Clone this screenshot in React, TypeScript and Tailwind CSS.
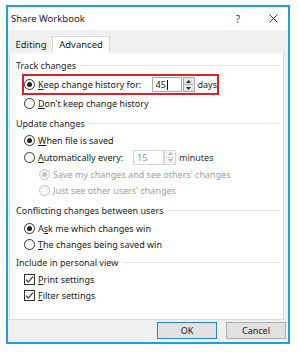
import React from "react";

function Radio({ checked = false, disabled = false }: { checked?: boolean; disabled?: boolean }) {
  return (
    <span
      className={`w-[11px] h-[11px] rounded-full border flex items-center justify-center shrink-0 ${
        disabled ? "border-[#c4c4c4] bg-[#f7f7f7]" : "border-[#333333] bg-white"
      }`}
    >
      {checked && (
        <span
          className={`w-[5px] h-[5px] rounded-full ${disabled ? "bg-[#c4c4c4]" : "bg-[#1f1f1f]"}`}
        ></span>
      )}
    </span>
  );
}

function Check() {
  return (
    <span className="w-[11px] h-[11px] border border-[#333333] bg-white flex items-center justify-center shrink-0">
      <svg width="9" height="9" viewBox="0 0 9 9">
        <path d="M1 4.6 L3.4 7 L8 1.6" fill="none" stroke="#222" strokeWidth="1.1" />
      </svg>
    </span>
  );
}

function Spinner({ disabled = false }: { disabled?: boolean }) {
  const c = disabled ? "#b5b5b5" : "#333";
  return (
    <div
      className={`w-[12px] h-[15px] border flex flex-col shrink-0 ${
        disabled ? "border-[#d6d6d6] bg-[#f4f4f4]" : "border-[#adadad] bg-[#e8e8e8]"
      }`}
    >
      <div className="flex-1 flex items-center justify-center">
        <svg width="5" height="3" viewBox="0 0 5 3">
          <path d="M0 3 L2.5 0 L5 3 Z" fill={c} />
        </svg>
      </div>
      <div className={`h-px mx-[1px] ${disabled ? "bg-[#d6d6d6]" : "bg-[#adadad]"}`}></div>
      <div className="flex-1 flex items-center justify-center">
        <svg width="5" height="3" viewBox="0 0 5 3">
          <path d="M0 0 L2.5 3 L5 0 Z" fill={c} />
        </svg>
      </div>
    </div>
  );
}

function GroupHeader({ label, className = "" }: { label: string; className?: string }) {
  return (
    <div className={`h-[16px] flex items-center gap-[5px] whitespace-nowrap ${className}`}>
      <span className="text-[#262626]">{label}</span>
      <div className="flex-1 h-px bg-[#e2e2e2]"></div>
    </div>
  );
}

export default function App() {
  return (
    <div
      className="w-[299px] h-[352px] bg-white pt-[5px] pl-[6px] text-[9px] leading-none text-[#1a1a1a] whitespace-nowrap"
      style={{ fontFamily: '"Noto Sans", "Open Sans", sans-serif' }}
    >
      <div className="w-[284px] h-[339px] border-2 border-[#1ba1e2] flex flex-col bg-[#f0f0f0]">
        {/* Title bar */}
        <div className="h-[23px] bg-white flex items-center pl-[3px] pr-[10px] shrink-0">
          <span className="text-[9.5px] text-[#1a1a1a]">Share Workbook</span>
          <span className="ml-auto text-[10px] text-[#333]">?</span>
          <svg className="ml-[29px]" width="9" height="9" viewBox="0 0 9 9">
            <path d="M0.5 0.5 L8.5 8.5 M8.5 0.5 L0.5 8.5" stroke="#333" strokeWidth="1" />
          </svg>
        </div>

        {/* Tabs */}
        <div className="h-[23px] flex items-end pl-[2px] shrink-0">
          <div className="h-[17px] w-[42px] flex items-center justify-center text-[9.5px]">Editing</div>
          <div className="h-[17px] w-[58px] bg-white border border-b-0 border-[#d9d9d9] flex items-center justify-center text-[9.5px]">
            Advanced
          </div>
        </div>

        {/* Panel */}
        <div className="h-[267px] ml-[1px] mr-[4px] bg-white border border-[#d9d9d9] border-t-0 pl-[6px] pr-[3px] pt-[4px] flex flex-col">
          <GroupHeader label="Track changes" />

          <div className="mt-[1px] ml-[6px] w-[197px] h-[21px] border-2 border-[#d8232a] flex items-center">
            <Radio checked />
            <span className="ml-[3px] w-[114px]">
              <u className="underline-offset-[1px]">K</u>eep change history for:
            </span>
            <div className="w-[30px] h-[15px] border border-[#abadb3] bg-white flex items-center pl-[3px]">
              45<span className="w-px h-[10px] bg-[#111] ml-[1px]"></span>
            </div>
            <div className="ml-[1px]">
              <Spinner />
            </div>
            <span className="ml-[3px]">days</span>
          </div>

          <div className="h-[16px] flex items-center ml-[8px]">
            <Radio />
            <span className="ml-[3px]">
              <u className="underline-offset-[1px]">D</u>on't keep change history
            </span>
          </div>

          <GroupHeader label="Update changes" className="mt-[4px]" />

          <div className="h-[16px] mt-[1px] flex items-center ml-[8px]">
            <Radio checked />
            <span className="ml-[3px]">
              <u className="underline-offset-[1px]">W</u>hen file is saved
            </span>
          </div>

          <div className="h-[16px] mt-[1px] flex items-center ml-[8px]">
            <Radio />
            <span className="ml-[3px] w-[95px]">
              <u className="underline-offset-[1px]">A</u>utomatically every:
            </span>
            <div className="w-[31px] h-[15px] border border-[#d6d6d6] bg-white flex items-center pl-[3px] text-[#9a9a9a]">
              15
            </div>
            <Spinner disabled />
            <span className="ml-[3px] text-[#333]">minutes</span>
          </div>

          <div className="h-[16px] mt-[1px] flex items-center ml-[23px] text-[#a0a0a0]">
            <Radio checked disabled />
            <span className="ml-[3px]">Save my changes and see others' changes</span>
          </div>

          <div className="h-[16px] flex items-center ml-[23px] text-[#a0a0a0]">
            <Radio disabled />
            <span className="ml-[3px]">Just see other users' changes</span>
          </div>

          <GroupHeader label="Conflicting changes between users" className="mt-[4px]" />

          <div className="h-[16px] mt-[2px] flex items-center ml-[8px]">
            <Radio checked />
            <span className="ml-[3px]">
              A<u className="underline-offset-[1px]">s</u>k me which changes win
            </span>
          </div>

          <div className="h-[16px] flex items-center ml-[8px]">
            <Radio />
            <span className="ml-[3px]">
              <u className="underline-offset-[1px]">T</u>he changes being saved win
            </span>
          </div>

          <GroupHeader label="Include in personal view" className="mt-[2px]" />

          <div className="h-[16px] mt-[1px] flex items-center ml-[8px]">
            <Check />
            <span className="ml-[3px]">
              <u className="underline-offset-[1px]">P</u>rint settings
            </span>
          </div>

          <div className="h-[16px] flex items-center ml-[8px]">
            <Check />
            <span className="ml-[3px]">
              <u className="underline-offset-[1px]">F</u>ilter settings
            </span>
          </div>
        </div>

        {/* Buttons */}
        <div className="mt-[2px] h-[17px] flex justify-end gap-[9px] pr-[2px]">
          <button className="w-[60px] h-[17px] bg-[#e1e1e1] border border-[#2f7fc8] flex items-center justify-center">
            OK
          </button>
          <button className="w-[60px] h-[17px] bg-[#e1e1e1] border border-[#adadad] flex items-center justify-center">
            Cancel
          </button>
        </div>
      </div>
    </div>
  );
}
